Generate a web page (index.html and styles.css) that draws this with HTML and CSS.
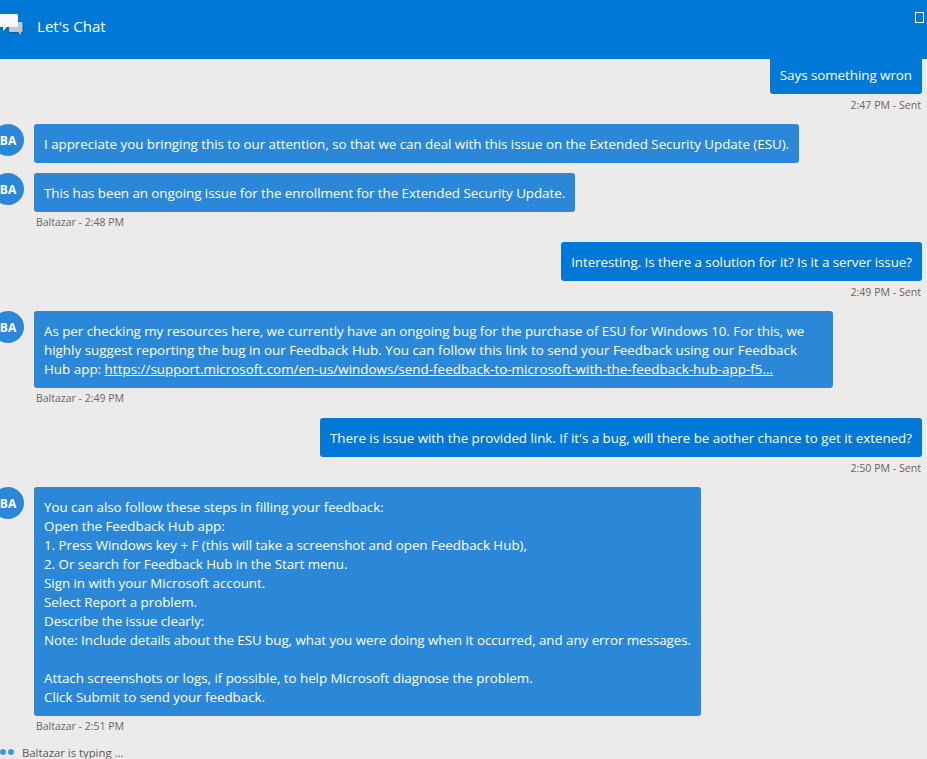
FILE: index.html
```
<!DOCTYPE html>
<html lang="en">
  <head>
    <meta charset="UTF-8" />
    <meta name="viewport" content="width=device-width, initial-scale=1.0" />
    <title>Let's Chat</title>
    <link rel="stylesheet" href="styles.css">
  </head>
  <body>
    <header class="header">
      <svg class="logo" width="24" height="24" viewBox="0 0 24 24">
        <path d="M9 8h12.5q1 0 1 1v8q0 1-1 1H21v3l-3-3h-8q-1 0-1-1z" fill="#c3c6ca" />
        <path d="M-2 0h19q1 0 1 1v11q0 1-1 1H7l-4 4v-4h-5z" fill="#f8f8f8" />
      </svg>
      <h1>Let's Chat</h1>
      <span class="window-button"></span>
    </header>

    <main class="chat">
      <div class="message sent">
        <div class="bubble cut">Says something wron</div>
      </div>
      <div class="meta right">2:47 PM - Sent</div>

      <div class="message">
        <div class="avatar">BA</div>
        <div class="bubble appreciate">I appreciate you bringing this to our attention, so that we can deal with this issue on the Extended Security Update (ESU).</div>
      </div>
      <div class="message">
        <div class="avatar">BA</div>
        <div class="bubble ongoing">This has been an ongoing issue for the enrollment for the Extended Security Update.</div>
      </div>
      <div class="meta">Baltazar - 2:48 PM</div>

      <div class="message sent">
        <div class="bubble question">Interesting. Is there a solution for it? Is it a server issue?</div>
      </div>
      <div class="meta right">2:49 PM - Sent</div>

      <div class="message">
        <div class="avatar">BA</div>
        <div class="bubble resources"><span class="tight">As per checking my resources here, we currently have an ongoing bug for the purchase of ESU for Windows 10. For this, we</span><br />highly suggest reporting the bug in our Feedback Hub. You can follow this link to send your Feedback using our Feedback<br />Hub app: <a href="#">https://support.microsoft.com/en-us/windows/send-feedback-to-microsoft-with-the-feedback-hub-app-f5...</a></div>
      </div>
      <div class="meta">Baltazar - 2:49 PM</div>

      <div class="message sent">
        <div class="bubble link-issue">There is issue with the provided link. If it's a bug, will there be aother chance to get it extened?</div>
      </div>
      <div class="meta right">2:50 PM - Sent</div>

      <div class="message">
        <div class="avatar">BA</div>
        <div class="bubble steps">You can also follow these steps in filling your feedback:<br />
          Open the Feedback Hub app:<br />
          1. Press Windows key + F (this will take a screenshot and open Feedback Hub),<br />
          2. Or search for Feedback Hub in the Start menu.<br />
          Sign in with your Microsoft account.<br />
          Select Report a problem.<br />
          Describe the issue clearly:<br />
          <span class="note">Note: Include details about the ESU bug, what you were doing when it occurred, and any error messages.</span><br />
          <br />
          Attach screenshots or logs, if possible, to help Microsoft diagnose the problem.<br />
          Click Submit to send your feedback.</div>
      </div>
      <div class="meta">Baltazar - 2:51 PM</div>

      <div class="typing">
        <span class="dot"></span>
        <span class="dot"></span>
        <span class="typing-text">Baltazar is typing ...</span>
      </div>
    </main>
  </body>
</html>
```
FILE: styles.css
```
* {
  box-sizing: border-box;
}

body {
  margin: 0;
  height: 100vh;
  overflow: hidden;
  background: #ecebea;
  font-family: "Open Sans", "Noto Sans", sans-serif;
  font-size: 13.4px;
  line-height: 19px;
}

/* Header bar */
.header {
  position: relative;
  z-index: 1;
  display: flex;
  height: 59px;
  background: #0078d7;
  color: #fff;
}

.logo {
  margin-top: 14px;
  filter: drop-shadow(0 1px 1px rgba(0, 0, 0, 0.25));
}

.header h1 {
  margin: 16px 0 0 13px;
  font-size: 15.1px;
  font-weight: 400;
  line-height: 21px;
}

.window-button {
  width: 9px;
  height: 11px;
  margin: 12px 3px 0 auto;
  border: 1px solid #fff;
}

/* The conversation is scrolled, its first bubble goes under the header */
.chat {
  margin-top: -4px;
}

.message {
  display: flex;
  align-items: flex-start;
  gap: 10px;
  margin: 0 5px 10px -8px;
}

.sent {
  justify-content: flex-end;
}

.avatar {
  width: 32px;
  height: 32px;
  border-radius: 50%;
  background: #2b88d8;
  color: #fff;
  font-size: 12px;
  font-weight: 700;
  line-height: 33px;
  text-align: center;
}

.bubble {
  padding: 11px 10px 9px;
  border-radius: 3px;
  background: #2b88d8;
  color: #fff;
  white-space: nowrap;
}

.sent .bubble {
  background: #0078d7;
}

.bubble a {
  color: #fff;
  letter-spacing: 0.025px;
}

/* Letter fit of the single messages */
.cut {
  letter-spacing: -0.05px;
}

.appreciate,
.tight {
  letter-spacing: -0.042px;
}

.ongoing,
.note {
  letter-spacing: -0.06px;
}

.question {
  letter-spacing: -0.066px;
}

.resources {
  width: 799px;
}

.link-issue {
  letter-spacing: -0.03px;
}

.steps {
  letter-spacing: -0.035px;
}

/* Sender and time under a group */
.meta {
  height: 20px;
  margin: -10px 6px 10px 36px;
  color: #666;
  font-size: 10.5px;
  line-height: 20px;
}

.right {
  font-size: 10.6px;
  line-height: 22px;
  text-align: right;
}

/* Typing indicator */
.typing {
  display: flex;
  align-items: center;
  gap: 2px;
  height: 20px;
  margin-top: -4px;
  color: #555;
  font-size: 11.3px;
}

.dot {
  width: 6px;
  height: 6px;
  border-radius: 50%;
  background: #4a96dc;
}

.typing-text {
  margin-left: 6px;
}
```
